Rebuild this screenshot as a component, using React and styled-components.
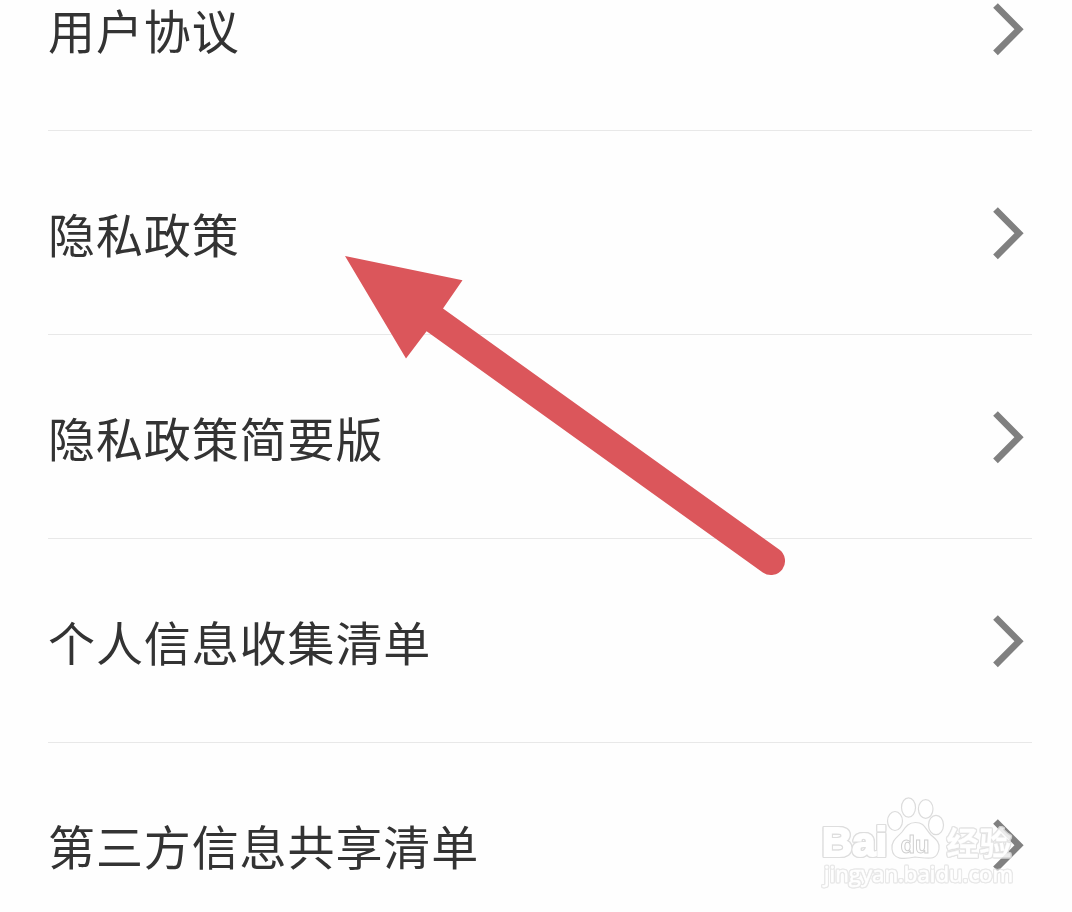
import React from 'react'
import styled, { createGlobalStyle } from 'styled-components';

const items = [
    '用户协议',
    '隐私政策',
    '隐私政策简要版',
    '个人信息收集清单',
    '第三方信息共享清单',
];

function Chevron() {
    return (
        <ChevronIcon viewBox="0 0 32 54">
            <path d="M3.5 3.5 L27 27.2 L3.5 50.9" />
        </ChevronIcon>
    )
}

function Arrow() {
    return (
        <ArrowShape viewBox="0 0 442 320">
            <path d="M0 0 L117.5 24.3 L98 52.6 L434.2 293.6 A14 14 0 0 1 417.8 316.4 L81.6 75.3 L61 102.5 Z" />
        </ArrowShape>
    )
}

function Watermark() {
    return (
        <Mark viewBox="0 0 204 96">
            {/* paw */}
            <ellipse cx="79" cy="26" rx="7.5" ry="9.5" />
            <ellipse cx="92.5" cy="12.5" rx="7" ry="9.7" />
            <ellipse cx="109.7" cy="14" rx="7.3" ry="9.3" />
            <ellipse cx="120" cy="30" rx="7.5" ry="9.7" />
            <path d="M99.5 27.5 C109 27.5 109 34 115 40 C121 45 124 48 123 54 C121 66 113 63.5 99 62 C88 64.5 77 65 76 54 C75 45 82 42 86 37 C90 31 93 27.5 99.5 27.5 Z" />
            <Bai x="6" y="61" textLength="65" lengthAdjust="spacingAndGlyphs">Bai</Bai>
            <Du x="84.5" y="58" textLength="29" lengthAdjust="spacingAndGlyphs">du</Du>
            <Jingyan x="130.5" y="59.5" textLength="65">经验</Jingyan>
            <Site x="8" y="87" textLength="189" lengthAdjust="spacingAndGlyphs">jingyan.baidu.com</Site>
        </Mark>
    )
}

export default function App() {
    return (
        <Page>
            <GlobalStyle />
            <List>
                {items.map(item => (
                    <Row key={item}>
                        <Label>{item}</Label>
                        <Chevron />
                    </Row>
                ))}
            </List>
            <Arrow />
            <Watermark />
        </Page>
    )
}

const GlobalStyle = createGlobalStyle`
body {
    margin: 0;
    background: #fefefe;
}
`;

const Page = styled.main`
position: relative;
height: 912px;
overflow: hidden;
background: #fefefe;
font-family: "Noto Sans CJK SC", sans-serif;
`;

/* the list is scrolled, so its first row is cut by the top edge */
const List = styled.ul`
list-style: none;
margin: -73px 40px 0 48px;
padding: 0;
will-change: transform;
`;

const Row = styled.li`
display: flex;
align-items: center;
justify-content: space-between;
box-sizing: border-box;
height: 204px;
padding-right: 8px;
border-bottom: 1px solid #e8e8e8;
`;

const Label = styled.span`
font-size: 47px;
line-height: 60px;
letter-spacing: 0.9px;
color: #333;
`;

const ChevronIcon = styled.svg`
width: 32px;
height: 54px;
fill: none;
stroke: #808080;
stroke-width: 6.6;
`;

const ArrowShape = styled.svg`
position: absolute;
left: 345px;
top: 256px;
width: 442px;
height: 320px;
fill: #db565b;
`;

const Mark = styled.svg`
position: absolute;
left: 816px;
top: 795px;
width: 204px;
height: 96px;
fill: rgba(255, 255, 255, 0.8);
stroke: #dcdcdc;
stroke-width: 1.2;
`;

/* white letters, only their grey edge shows on the page */
const Outlined = styled.text`
fill: #fff;
stroke: #fff;
filter: drop-shadow(1px 0 0 #dedede) drop-shadow(-1px 0 0 #dedede) drop-shadow(0 1px 0 #dedede) drop-shadow(0 -1px 0 #dedede);
`;

const Bai = styled(Outlined)`
font: bold 40px "Liberation Sans", sans-serif;
stroke-width: 2;
`;

const Du = styled.text`
font: bold 24px "Liberation Sans", sans-serif;
stroke: #d0d0d0;
stroke-width: 1;
`;

const Jingyan = styled(Outlined)`
font: bold 32px "Noto Sans CJK SC", sans-serif;
stroke-width: 0.3;
opacity: 0.85;
`;

const Site = styled(Outlined)`
font: 22px "Open Sans", sans-serif;
stroke-width: 0.6;
opacity: 0.7;
`;
